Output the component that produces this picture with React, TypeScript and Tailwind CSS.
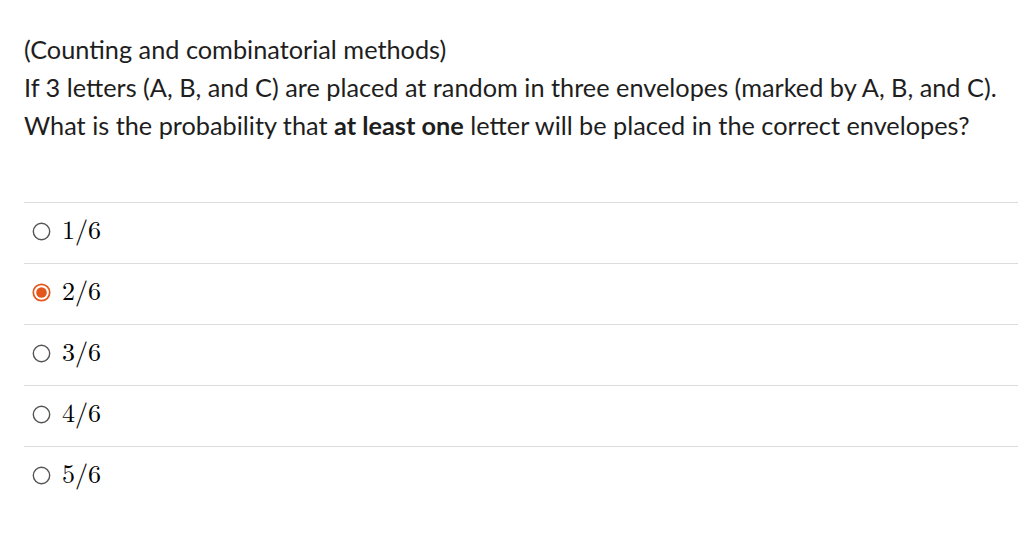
import React from "react";

const options = ["1/6", "2/6", "3/6", "4/6", "5/6"];

function Radio({ checked }: { checked: boolean }) {
  if (checked) {
    return (
      <svg width="19" height="19" viewBox="0 0 19 19">
        <circle cx="9.5" cy="9.5" r="8.2" fill="none" stroke="#e4571c" strokeWidth="1.7" />
        <circle cx="9.5" cy="9.5" r="5.3" fill="#e4571c" />
      </svg>
    );
  }
  return (
    <svg width="19" height="19" viewBox="0 0 19 19">
      <circle cx="9.5" cy="9.5" r="8.2" fill="none" stroke="#555" strokeWidth="1.4" />
    </svg>
  );
}

export default function App() {
  return (
    <div className="w-[1024px] h-[534px] bg-white pl-6 pr-[6px] pt-[30px]" style={{ fontFamily: "Lato, 'Open Sans', sans-serif" }}>
      <div className="text-[25.3px] leading-[38px] text-[#1e1e1e]">
        <div>(Counting and combinatorial methods)</div>
        <div className="whitespace-nowrap">If 3 letters (A, B, and C) are placed at random in three envelopes (marked by A, B, and C).</div>
        <div className="whitespace-nowrap">
          What is the probability that <b className="font-bold">at least one</b> letter will be placed in the correct envelopes?
        </div>
      </div>
      <div className="mt-[58px]">
        {options.map((o, i) => (
          <div key={o} className="h-[61px] border-t border-[#dcdcdc] flex items-center pl-[8px] pb-[3px] gap-[11px]">
            <Radio checked={i === 1} />
            <span className="text-[26px] text-black" style={{ fontFamily: "'Latin Modern Math', 'DejaVu Serif', 'Liberation Serif', serif" }}>
              {o}
            </span>
          </div>
        ))}
      </div>
    </div>
  );
}
